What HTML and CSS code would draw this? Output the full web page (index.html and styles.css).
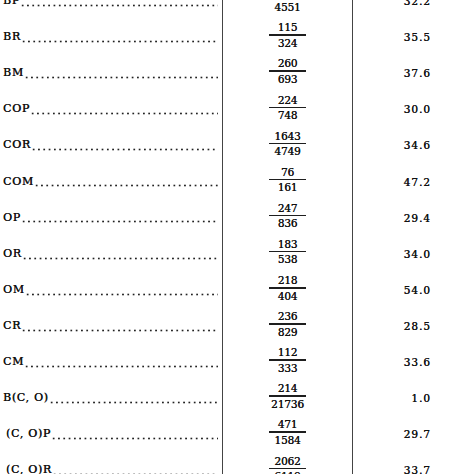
FILE: index.html
```html
<!DOCTYPE html>
<html>
<head>
<meta charset="utf-8">
<link rel="stylesheet" href="styles.css">
</head>
<body>
<div class="table">
  <div class="row"><div class="label"><span class="name">BP</span><span class="dots"></span></div><div class="frac"><span class="num">1465</span><span class="bar"></span><span class="den">4551</span></div><div class="val">32.2</div></div>
  <div class="row"><div class="label"><span class="name">BR</span><span class="dots"></span></div><div class="frac"><span class="num">115</span><span class="bar"></span><span class="den">324</span></div><div class="val">35.5</div></div>
  <div class="row"><div class="label"><span class="name">BM</span><span class="dots"></span></div><div class="frac"><span class="num">260</span><span class="bar"></span><span class="den">693</span></div><div class="val">37.6</div></div>
  <div class="row"><div class="label"><span class="name">COP</span><span class="dots"></span></div><div class="frac"><span class="num">224</span><span class="bar"></span><span class="den">748</span></div><div class="val">30.0</div></div>
  <div class="row"><div class="label"><span class="name">COR</span><span class="dots"></span></div><div class="frac"><span class="num">1643</span><span class="bar"></span><span class="den">4749</span></div><div class="val">34.6</div></div>
  <div class="row"><div class="label"><span class="name">COM</span><span class="dots"></span></div><div class="frac"><span class="num">76</span><span class="bar"></span><span class="den">161</span></div><div class="val">47.2</div></div>
  <div class="row"><div class="label"><span class="name">OP</span><span class="dots"></span></div><div class="frac"><span class="num">247</span><span class="bar"></span><span class="den">836</span></div><div class="val">29.4</div></div>
  <div class="row"><div class="label"><span class="name">OR</span><span class="dots"></span></div><div class="frac"><span class="num">183</span><span class="bar"></span><span class="den">538</span></div><div class="val">34.0</div></div>
  <div class="row"><div class="label"><span class="name">OM</span><span class="dots"></span></div><div class="frac"><span class="num">218</span><span class="bar"></span><span class="den">404</span></div><div class="val">54.0</div></div>
  <div class="row"><div class="label"><span class="name">CR</span><span class="dots"></span></div><div class="frac"><span class="num">236</span><span class="bar"></span><span class="den">829</span></div><div class="val">28.5</div></div>
  <div class="row"><div class="label"><span class="name">CM</span><span class="dots"></span></div><div class="frac"><span class="num">112</span><span class="bar"></span><span class="den">333</span></div><div class="val">33.6</div></div>
  <div class="row"><div class="label"><span class="name">B(C, O)</span><span class="dots"></span></div><div class="frac"><span class="num">214</span><span class="bar"></span><span class="den">21736</span></div><div class="val">1.0</div></div>
  <div class="row"><div class="label indent"><span class="name">(C, O)P</span><span class="dots"></span></div><div class="frac"><span class="num">471</span><span class="bar"></span><span class="den">1584</span></div><div class="val">29.7</div></div>
  <div class="row"><div class="label indent"><span class="name">(C, O)R</span><span class="dots"></span></div><div class="frac"><span class="num">2062</span><span class="bar"></span><span class="den">6119</span></div><div class="val">33.7</div></div>
</div>
</body>
</html>
```
FILE: styles.css
```css
html, body {
  margin: 0;
  padding: 0;
  background: #ffffff;
  overflow: hidden;
}
body {
  width: 474px;
  height: 474px;
  font-family: "DejaVu Serif", "Liberation Serif", serif;
  color: #111111;
}
.table {
  margin-top: -17px;
  display: flex;
  flex-direction: column;
}
.row {
  display: grid;
  grid-template-columns: 222px 130px 1fr;
  height: 36.1px;
}
.label {
  display: flex;
  align-items: center;
  padding-left: 3px;
  padding-right: 4px;
  font-size: 11px;
  letter-spacing: 0.7px;
  text-shadow: 0.35px 0 0 #111;
}
.label.indent {
  padding-left: 6px;
}
.name {
  white-space: nowrap;
  line-height: 12px;
}
.dots {
  flex: 1;
  height: 12px;
  background-image: radial-gradient(circle, #222 0.85px, transparent 1.2px);
  background-size: 5.3px 3px;
  background-repeat: repeat-x;
  background-position: 0 8.8px;
}
.frac {
  border-left: 1.6px solid #444;
  display: flex;
  flex-direction: column;
  align-items: center;
  justify-content: center;
  padding-bottom: 4px;
  font-size: 10.5px;
  text-shadow: 0.3px 0 0 #111;
}
.num, .den {
  line-height: 14px;
  letter-spacing: -0.1px;
}
.bar {
  width: 37px;
  height: 1.5px;
  background: #1e1e1e;
}
.val {
  border-left: 1.6px solid #444;
  display: flex;
  align-items: center;
  justify-content: flex-end;
  padding-right: 43px;
  font-size: 10.5px;
  letter-spacing: 1px;
  text-shadow: 0.3px 0 0 #111;
}
```
